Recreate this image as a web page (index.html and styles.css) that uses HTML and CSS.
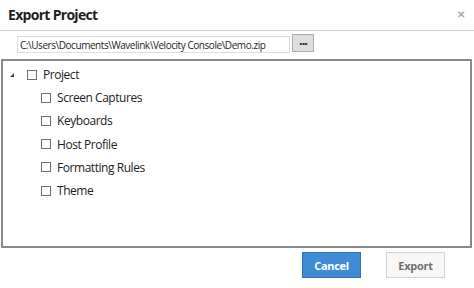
FILE: index.html
```html
<!DOCTYPE html>
<html lang="en">
<head>
    <meta charset="UTF-8">
    <meta name="viewport" content="width=device-width, initial-scale=1.0">
    <link rel="stylesheet" href="styles.css">
    <title>Export Project</title>
</head>
<body>
    <div class="dialog">
        <div class="dialog-header">
            <h3 class="dialog-title">Export Project</h3>
            <span class="dialog-close">&#x2715;</span>
        </div>
        <div class="path-row">
            <input type="text" class="path-input" value="C:\Users\Documents\Wavelink\Velocity Console\Demo.zip">
            <button class="browse-btn">&middot;&middot;&middot;</button>
        </div>
        <div class="tree">
            <div class="tree-row">
                <span class="tree-toggle"></span>
                <span class="check"></span>
                <span class="tree-label">Project</span>
            </div>
            <div class="tree-children">
                <div class="tree-row"><span class="check"></span><span class="tree-label">Screen Captures</span></div>
                <div class="tree-row"><span class="check"></span><span class="tree-label">Keyboards</span></div>
                <div class="tree-row"><span class="check"></span><span class="tree-label">Host Profile</span></div>
                <div class="tree-row"><span class="check"></span><span class="tree-label">Formatting Rules</span></div>
                <div class="tree-row"><span class="check"></span><span class="tree-label">Theme</span></div>
            </div>
        </div>
        <div class="dialog-footer">
            <button class="btn btn-primary">Cancel</button>
            <button class="btn btn-disabled">Export</button>
        </div>
    </div>
</body>
</html>
```

FILE: styles.css
```css
*{
    box-sizing: border-box;
}

body{
    margin: 0;
    background-color: #fff;
    font-family: "Open Sans", "Noto Sans", sans-serif;
    color: #222;
}

.dialog{
    width: 474px;
    height: 288px;
}

.dialog-header{
    display: flex;
    align-items: center;
    justify-content: space-between;
    height: 31px;
    padding: 0 8px 2px 8px;
    border-bottom: 1px solid #d2d2d2;
}

.dialog-title{
    margin: 0;
    font-size: 14px;
    font-weight: 700;
    color: #1e1e1e;
    letter-spacing: -0.7px;
}

.dialog-close{
    font-size: 10px;
    font-weight: 700;
    color: #a8a8a8;
    margin-right: 1px;
}

.path-row{
    display: flex;
    align-items: flex-start;
    gap: 2px;
    height: 28px;
    padding: 3px 0 0 17px;
}

.path-input{
    width: 273px;
    height: 17px;
    margin-top: 2px;
    padding: 0 2px;
    font-family: inherit;
    font-size: 10px;
    letter-spacing: -0.45px;
    color: #1e1e1e;
    border: 1px solid #dcdcdc;
    outline: none;
}

.browse-btn{
    width: 22px;
    height: 18px;
    padding: 0;
    font-family: inherit;
    font-size: 13px;
    font-weight: 700;
    line-height: 1;
    letter-spacing: -1px;
    color: #222;
    background-color: #dedede;
    border: 1px solid #adadad;
}

.tree{
    height: 189px;
    margin: 0 2px 0 1px;
    padding-top: 2px;
    border: 2px solid #8a8a8a;
}

.tree-row{
    display: flex;
    align-items: center;
    height: 23.2px;
    font-size: 12px;
    letter-spacing: -0.45px;
}

.tree-row > .tree-toggle{
    width: 0;
    height: 0;
    margin: 0 13px 0 7px;
    border-left: 4px solid transparent;
    border-bottom: 4px solid #444;
}

.tree-children{
    padding-left: 38px;
}

.check{
    width: 10px;
    height: 10px;
    margin-right: 6px;
    border: 1px solid #6f6f6f;
    background-color: #fff;
}

.dialog-footer{
    display: flex;
    justify-content: flex-end;
    gap: 25px;
    padding: 4px 29px 0 0;
}

.btn{
    width: 59px;
    height: 26px;
    font-family: inherit;
    font-size: 11px;
    font-weight: 700;
    letter-spacing: -0.3px;
}

.btn-primary{
    color: #fff;
    background-color: #3f8cd4;
    border: 1px solid #2f72b3;
}

.btn-disabled{
    color: #6e6e6e;
    background-color: #f7f7f7;
    border: 1px solid #d4d4d4;
}
```
